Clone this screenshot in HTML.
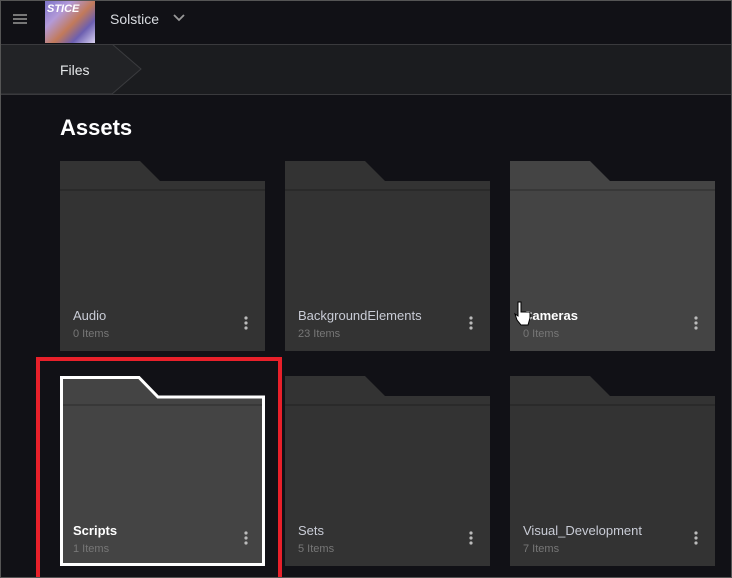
<!DOCTYPE html>
<html><head><meta charset="utf-8"><style>
html,body{margin:0;padding:0;width:732px;height:578px;overflow:hidden;background:#111116;font-family:"Liberation Sans",Arial,sans-serif;}
.abs{position:absolute}
</style></head><body>
<div class="abs" style="left:0;top:0;width:732px;height:578px;overflow:hidden">
<!-- header -->
<div class="abs" style="left:0;top:0;width:732px;height:44px;background:#111116;border-top:1px solid #555;box-sizing:border-box"></div>
<div class="abs" style="left:13px;top:14px;width:14px;height:2px;background:#777;box-shadow:0 4px 0 #777,0 8px 0 #777"></div>
<div class="abs" style="left:45px;top:0;width:50px;height:43px;background:linear-gradient(135deg,#7a72c8 0%,#b39ad8 30%,#c27a5a 55%,#6c5fb0 75%,#d8d0f0 100%)"></div>
<div class="abs" style="left:47px;top:3px;font-size:11px;color:#fff;font-weight:bold;font-style:italic">STICE</div>
<div class="abs" style="left:110px;top:11px;font-size:14px;color:#d8dbe0">Solstice</div>
<svg class="abs" style="left:172px;top:13px" width="14" height="10"><path d="M2 2 L7 7 L12 2" stroke="#999" stroke-width="1.8" fill="none"/></svg>
<!-- breadcrumb -->
<svg class="abs" style="left:0;top:44px" width="732" height="51">
<rect x="0" y="0" width="732" height="51" fill="#1b1c1f"/>
<path d="M0 0 H112 L141 25 L112 50 H0 Z" fill="#222326" stroke="#3a3b3e" stroke-width="1"/>
<line x1="0" y1="0.5" x2="732" y2="0.5" stroke="#3a3a3d"/>
<line x1="0" y1="50.5" x2="732" y2="50.5" stroke="#3a3a3d"/>
</svg>
<div class="abs" style="left:60px;top:62px;font-size:14px;color:#e6e8ea">Files</div>
<div class="abs" style="left:60px;top:115px;font-size:22px;font-weight:bold;color:#fff">Assets</div>
<!-- folders -->
<svg class="abs" style="left:0;top:0" width="732" height="578">
<g id="f">
</g>
<!-- row1 -->
<path d="M60 161 H140 L160 181 H265 V351 H60 Z" fill="#333"/>
<rect x="60" y="189" width="205" height="2" fill="#2a2a2a"/>
<path d="M285 161 H365 L385 181 H490 V351 H285 Z" fill="#333"/>
<rect x="285" y="189" width="205" height="2" fill="#2a2a2a"/>
<path d="M510 161 H590 L610 181 H715 V351 H510 Z" fill="#444"/>
<rect x="510" y="189" width="205" height="2" fill="#383838"/>
<!-- row2 -->
<path d="M61.5 377.5 H139 L158 397 H263.5 V564.5 H61.5 Z" fill="#444" stroke="#fff" stroke-width="3"/>
<rect x="63" y="404" width="199" height="2" fill="#383838"/>
<path d="M285 376 H365 L385 396 H490 V566 H285 Z" fill="#333"/>
<rect x="285" y="404" width="205" height="2" fill="#2a2a2a"/>
<path d="M510 376 H590 L610 396 H715 V566 H510 Z" fill="#333"/>
<rect x="510" y="404" width="205" height="2" fill="#2a2a2a"/>
<!-- dots -->
<g fill="#bbb">
<circle cx="246" cy="318" r="1.6"/><circle cx="246" cy="323" r="1.6"/><circle cx="246" cy="328" r="1.6"/>
<circle cx="471" cy="318" r="1.6"/><circle cx="471" cy="323" r="1.6"/><circle cx="471" cy="328" r="1.6"/>
<circle cx="696" cy="318" r="1.6"/><circle cx="696" cy="323" r="1.6"/><circle cx="696" cy="328" r="1.6"/>
<circle cx="246" cy="533" r="1.6"/><circle cx="246" cy="538" r="1.6"/><circle cx="246" cy="543" r="1.6"/>
<circle cx="471" cy="533" r="1.6"/><circle cx="471" cy="538" r="1.6"/><circle cx="471" cy="543" r="1.6"/>
<circle cx="696" cy="533" r="1.6"/><circle cx="696" cy="538" r="1.6"/><circle cx="696" cy="543" r="1.6"/>
</g>
<!-- labels -->
<g font-family="Liberation Sans, Arial, sans-serif">
<text x="73" y="320" font-size="13" fill="#c9ccd6">Audio</text>
<text x="73" y="337" font-size="11" fill="#777">0 Items</text>
<text x="298" y="320" font-size="13" fill="#c9ccd6">BackgroundElements</text>
<text x="298" y="337" font-size="11" fill="#777">23 Items</text>
<text x="523" y="320" font-size="13" fill="#fff" font-weight="bold">Cameras</text>
<text x="523" y="337" font-size="11" fill="#777">0 Items</text>
<text x="73" y="535" font-size="13" fill="#fff" font-weight="bold">Scripts</text>
<text x="73" y="552" font-size="11" fill="#777">1 Items</text>
<text x="298" y="535" font-size="13" fill="#c9ccd6">Sets</text>
<text x="298" y="552" font-size="11" fill="#777">5 Items</text>
<text x="523" y="535" font-size="13" fill="#c9ccd6">Visual_Development</text>
<text x="523" y="552" font-size="11" fill="#777">7 Items</text>
</g>
<!-- cursor -->
<path d="M518 302 V316 L515 314 L517 320 L521 325 H528 L530 318 V312 H521 V302 Z" fill="#fff" stroke="#000" stroke-width="1"/>
<!-- red box -->
<rect x="38" y="359" width="242" height="222" fill="none" stroke="#e8202a" stroke-width="4"/>
<!-- outer border -->
<rect x="0.5" y="0.5" width="731" height="577" fill="none" stroke="#555"/>
</svg>
</div>
</body></html>
